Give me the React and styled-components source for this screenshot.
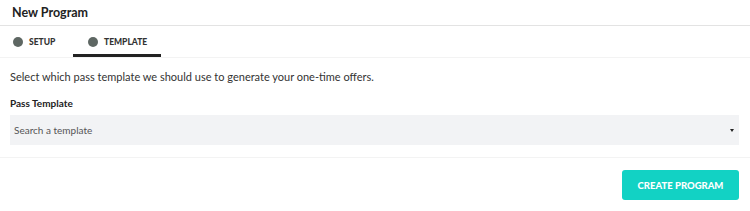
import styled, { createGlobalStyle } from "styled-components"

const Global = createGlobalStyle`
  body {
    margin: 0;
    font-family: "Lato", "Noto Sans", sans-serif;
    background: #fff;
    color: #333;
  }
`

const Page = styled.div`
  width: 750px;
  height: 211px;
  overflow: hidden;
  box-sizing: border-box;
`
const Header = styled.div`
  height: 25px;
  padding: 0 12px;
  display: flex;
  align-items: center;
  border-bottom: 1px solid #e3e3e3;
  font-size: 12.5px;
  font-weight: 700;
  color: #222;
`
const Tabs = styled.div`
  height: 31px;
  padding: 0 8px;
  display: flex;
  align-items: stretch;
  border-bottom: 1px solid #f3f3f3;
`
const Tab = styled.div`
  width: ${p => p.w}px;
  display: flex;
  align-items: center;
  gap: 6px;
  padding-left: ${p => p.pl}px;
  box-sizing: border-box;
  font-size: 8.5px;
  font-weight: 900;
  color: #333;
  border-bottom: 3px solid ${p => (p.active ? "#222" : "transparent")};
  padding-top: 3px;
`
const Dot = styled.span`
  width: 10px;
  height: 10px;
  border-radius: 50%;
  background: #5e6763;
`
const Body = styled.div`
  padding: 0 10px;
`
const Intro = styled.p`
  margin: 11px 0 0;
  font-size: 11px;
  color: #333;
  line-height: 15px;
`
const Label = styled.div`
  margin-top: 13px;
  font-size: 10px;
  font-weight: 700;
  color: #222;
  line-height: 12px;
`
const Select = styled.div`
  margin-top: 6px;
  height: 30px;
  width: 729px;
  background: #f2f3f5;
  display: flex;
  align-items: center;
  justify-content: space-between;
  padding: 0 4px;
  box-sizing: border-box;
  font-size: 10px;
  color: #555;
`
const Caret = styled.span`
  width: 0;
  height: 0;
  border-left: 2.5px solid transparent;
  border-right: 2.5px solid transparent;
  border-top: 3px solid #222;
  margin-right: 1px;
`
const Footer = styled.div`
  margin-top: 12px;
  border-top: 1px solid #f3f3f3;
  display: flex;
  justify-content: flex-end;
  padding: 12px 11px 0 0;
`
const Button = styled.button`
  width: 117px;
  height: 30px;
  border: none;
  border-radius: 3px;
  background: #12d2c4;
  color: #fff;
  font-family: inherit;
  font-size: 9.5px;
  font-weight: 900;
  cursor: pointer;
`

const App = () => {
  return (
    <Page>
      <Global />
      <Header>New Program</Header>
      <Tabs>
        <Tab w={65} pl={5}><Dot />SETUP</Tab>
        <Tab w={88} pl={15} active><Dot />TEMPLATE</Tab>
      </Tabs>
      <Body>
        <Intro>Select which pass template we should use to generate your one-time offers.</Intro>
        <Label>Pass Template</Label>
        <Select>
          <span>Search a template</span>
          <Caret />
        </Select>
      </Body>
      <Footer>
        <Button>CREATE PROGRAM</Button>
      </Footer>
    </Page>
  )
}

export default App
